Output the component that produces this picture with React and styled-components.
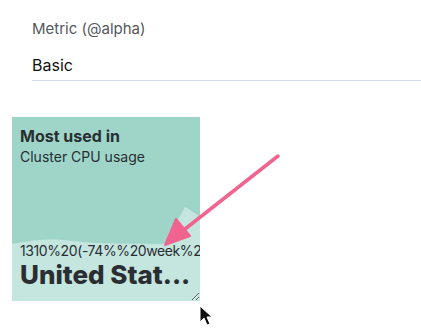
import React from "react";
import styled, { createGlobalStyle } from "styled-components";

const Global = createGlobalStyle`
  html, body { margin: 0; padding: 0; background: #ffffff; }
  body { font-family: Inter, "Noto Sans", sans-serif; }
`;

const Page = styled.div`
  position: relative;
  width: 421px;
  height: 333px;
  overflow: hidden;
  background: #fff;
`;

const Field = styled.div`
  display: flex;
  flex-direction: column;
  margin-left: 32px;
  padding-top: 19px;
`;

const Label = styled.div`
  font-size: 15px;
  line-height: 20px;
  color: #55585c;
`;

const Value = styled.div`
  margin-top: 16px;
  font-size: 16px;
  line-height: 20px;
  color: #111;
  padding-bottom: 5px;
  border-bottom: 1px solid #cfdce8;
`;

const Card = styled.div`
  position: relative;
  margin: 36px 0 0 12px;
  width: 188px;
  height: 184px;
  background: #9fd5c9;
  color: #2a2e33;
  resize: both;
  overflow: hidden;
  display: flex;
  flex-direction: column;
  justify-content: space-between;
  padding: 8px 0 0 8px;
  box-sizing: border-box;
`;

const Chart = styled.svg`
  position: absolute;
  left: 0;
  bottom: 0;
  width: 188px;
  height: 184px;
`;

const Top = styled.div`
  position: relative;
  display: flex;
  flex-direction: column;
`;

const Title = styled.div`
  font-size: 16px;
  font-weight: 700;
  line-height: 22px;
`;

const Sub = styled.div`
  font-size: 14px;
  line-height: 20px;
`;

const Bottom = styled.div`
  position: relative;
  display: flex;
  flex-direction: column;
`;

const Delta = styled.div`
  font-size: 14px;
  line-height: 18px;
  letter-spacing: -0.4px;
  white-space: nowrap;
`;

const Big = styled.div`
  font-size: 26px;
  font-weight: 800;
  line-height: 30px;
  white-space: nowrap;
  margin-bottom: 11px;
`;

const Overlay = styled.svg`
  position: absolute;
  left: 0;
  top: 0;
  pointer-events: none;
`;

export default function App() {
  return (
    <Page>
      <Global />
      <Field>
        <Label>Metric (@alpha)</Label>
        <Value>Basic</Value>
      </Field>
      <Card>
        <Chart viewBox="0 0 188 184">
          <path
            d="M0 127 C20 123 40 121 60 124 C90 128 120 126 150 127 L153 126 L173 90 L177 92 L188 100 L188 184 L0 184 Z"
            fill="#c4e6de"
          />
        </Chart>
        <Top>
          <Title>Most used in</Title>
          <Sub>Cluster CPU usage</Sub>
        </Top>
        <Bottom>
          <Delta>1310%20(-74%%20week%2</Delta>
          <Big>United Stat...</Big>
        </Bottom>
      </Card>
      <Overlay width="421" height="333" viewBox="0 0 421 333">
        <line x1="278" y1="156" x2="180" y2="233" stroke="#f0648f" strokeWidth="3.5" strokeLinecap="round" />
        <polygon points="165,245 176,219 190,236" fill="#f0648f" stroke="#f0648f" strokeWidth="2" strokeLinejoin="round" />
        <path
          d="M200 306 L200 322 L204 318 L207 325 L210 324 L207 317 L212 317 Z"
          fill="#111"
          stroke="#fff"
          strokeWidth="1"
          strokeLinejoin="round"
        />
      </Overlay>
    </Page>
  );
}
